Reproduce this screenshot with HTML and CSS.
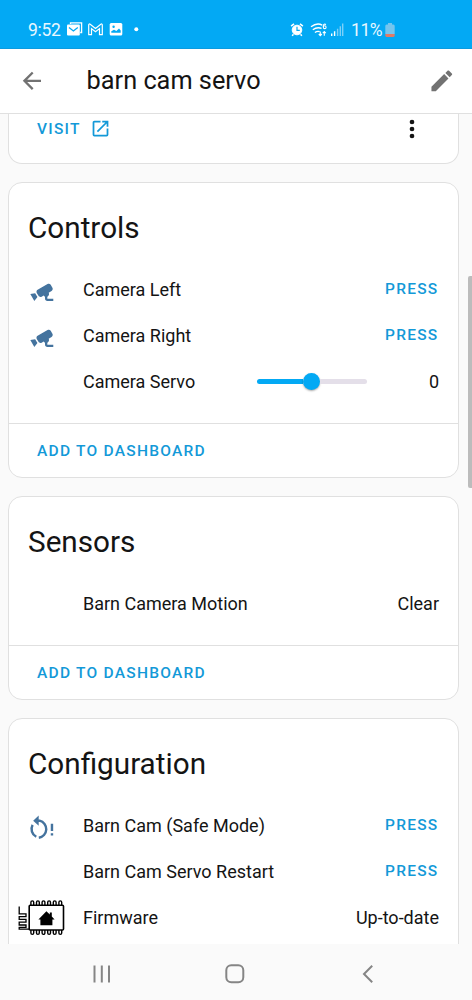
FILE: index.html
```html
<!DOCTYPE html>
<html lang="en">
<head>
<meta charset="utf-8">
<title>barn cam servo</title>
<link rel="stylesheet" href="styles.css">
</head>
<body>
<svg class="defs" aria-hidden="true">
  <symbol id="cctv" viewBox="0 0 24 24"><path d="M18.15,4.94C17.77,4.91 17.37,5 17,5.2L8.35,10.2C7.39,10.76 7.07,12 7.62,12.94L9.12,15.53C9.67,16.5 10.89,16.82 11.85,16.27L13.65,15.23C13.92,15.69 14.32,16.06 14.81,16.27V18.04C14.81,19.13 15.7,20 16.81,20H22V18.04H16.81V16.27C17.72,15.87 18.31,14.97 18.31,14C18.31,13.54 18.19,13.11 17.97,12.73L20.5,11.27C21.47,10.71 21.8,9.5 21.24,8.53L19.74,5.94C19.4,5.34 18.79,5 18.15,4.94M6.22,13.17L2,13.87L2.75,15.17L4.75,18.63L5.5,19.93L8.22,16.63L6.22,13.17Z"/></symbol>
</svg>
<div class="screen">
  <div class="status">
    <span class="clock">9:52</span>
    <svg class="notes" width="74" height="16" viewBox="0 0 74 16">
      <path d="M3.5 2V.9H14.6V10.5H13.2" fill="none" stroke="#fff" stroke-width="1.3"/>
      <rect x="0" y="2.6" width="12.8" height="10.8" rx="1" fill="#fff"/>
      <path d="M2 5.4L6.4 9L10.8 5.4" fill="none" stroke="#03a9f4" stroke-width="1.3"/>
      <path d="M21.7 12.7V2.8Q22 1.5 23.2 2.2L28.5 6.4L33.8 2.2Q35 1.5 35.3 2.8V12.7H32.5V6.6L28.5 9.7L24.5 6.6V12.7Z" fill="none" stroke="#fff" stroke-width="1.2"/>
      <rect x="42.7" y="1" width="12.6" height="12.4" rx="1.5" fill="#fff"/>
      <path d="M44.3 10.8V9.3L47 7.8L49.4 9.1L52 6.6L53.7 8.4V10.8Z" fill="#03a9f4"/>
      <circle cx="46.6" cy="4.7" r="1.2" fill="#03a9f4"/>
      <circle cx="69.3" cy="7.3" r="2" fill="#fff"/>
    </svg>
    <svg class="signals" width="58" height="16" viewBox="0 0 58 16">
      <circle cx="7" cy="8" r="4.8" fill="#fff" stroke="#fff" stroke-width="1"/>
      <path d="M1.1 4.2L4 1.8M12.9 4.2L10 1.8M3.4 12.3L2.2 13.9M10.6 12.3L11.8 13.9" stroke="#fff" stroke-width="1.5"/>
      <path d="M7 4.8V8.4H9.8" fill="none" stroke="#03a9f4" stroke-width="1.2"/>
      <g fill="none" stroke="#fff" stroke-width="1.4">
        <path d="M21 4.8Q27 .2 32.2 3.1M22.8 7.8Q27 4.6 31.6 6.4M24.9 10.5Q27.4 8.8 29.7 9.7"/>
        <path d="M30.3 9.5V13.5M28.8 12L30.3 13.6L31.8 12M34.3 13.7V9.7M32.8 11.1L34.3 9.5L35.8 11.1" stroke-width="1.1"/>
        <path d="M36 2.4Q33.2 1.2 33.2 4.8" stroke-width="1.1"/><circle cx="34.7" cy="5.2" r="1.4" stroke-width="1.1"/>
      </g>
      <path d="M41 14V11.5H42.4V14ZM43.9 14V9.2H45.3V14Z" fill="#fff"/>
      <path d="M46.9 14V6.7H48.3V14ZM49.6 14V4.3H51V14ZM52 14V1.6H53.4V14Z" fill="#7dd0f8"/>
    </svg>
    <span class="percent">11%</span>
    <svg class="battery" width="10" height="15" viewBox="0 0 10 15"><path d="M3 0H7V1.5H8.4Q9.7 1.5 9.7 3V11H.3V3Q.3 1.5 1.6 1.5H3Z" fill="#75c5ee"/><path d="M.3 11H9.7V12.6Q9.7 14 8.4 14H1.6Q.3 14 .3 12.6Z" fill="#e17b68"/></svg>
  </div>
  <div class="toolbar">
    <svg class="icon" viewBox="0 0 24 24"><path d="M20,11V13H8L13.5,18.5L12.08,19.92L4.16,12L12.08,4.08L13.5,5.5L8,11H20Z"/></svg>
    <span class="title">barn cam servo</span>
    <svg class="icon" viewBox="0 0 24 24"><path d="M20.71,7.04C21.1,6.65 21.1,6 20.71,5.63L18.37,3.29C18,2.9 17.35,2.9 16.96,3.29L15.12,5.12L18.87,8.87M3,17.25V21H6.75L17.81,9.93L14.06,6.18L3,17.25Z"/></svg>
  </div>
  <div class="content">
    <section class="card device">
      <span class="action">VISIT</span>
      <svg class="open" viewBox="0 0 24 24"><path d="M14,3V5H17.59L7.76,14.83L9.17,16.24L19,6.41V10H21V3M19,19H5V5H12V3H5C3.89,3 3,3.9 3,5V19A2,2 0 0,0 5,21H19A2,2 0 0,0 21,19V12H19V19Z"/></svg>
      <svg class="dots" viewBox="0 0 6 20"><circle cx="3" cy="3" r="2.35"/><circle cx="3" cy="10" r="2.35"/><circle cx="3" cy="17" r="2.35"/></svg>
    </section>
    <section class="card">
      <h2>Controls</h2>
      <div class="rows">
        <div class="row"><svg class="entity"><use href="#cctv"/></svg><span class="name">Camera Left</span><span class="action">PRESS</span></div>
        <div class="row"><svg class="entity"><use href="#cctv"/></svg><span class="name">Camera Right</span><span class="action">PRESS</span></div>
        <div class="row"><span class="entity"></span><span class="name">Camera Servo</span><span class="slider"><span class="fill"></span><span class="thumb"></span><span class="rest"></span></span><span class="value number">0</span></div>
      </div>
      <div class="footer"><span class="action">ADD TO DASHBOARD</span></div>
    </section>
    <section class="card">
      <h2>Sensors</h2>
      <div class="rows">
        <div class="row"><span class="entity"></span><span class="name">Barn Camera Motion</span><span class="value">Clear</span></div>
      </div>
      <div class="footer"><span class="action">ADD TO DASHBOARD</span></div>
    </section>
    <section class="card">
      <h2>Configuration</h2>
      <div class="rows">
        <div class="row"><svg class="entity" viewBox="0.9 -1 24 24"><path d="M4.9 8.4A7.6 7.6 0 0 0 8.1 18.8M10.3 19.7A7.6 7.6 0 0 0 11 4.8H8.5" fill="none" stroke="#44739e" stroke-width="2.1"/><path d="M10.2 .4V9.2L5.4 4.8Z"/><path d="M20.7 7.5H22.8V13.7H20.7ZM20.7 15.7H22.8V17.8H20.7Z"/></svg><span class="name">Barn Cam (Safe Mode)</span><span class="action">PRESS</span></div>
        <div class="row"><span class="entity"></span><span class="name">Barn Cam Servo Restart</span><span class="action">PRESS</span></div>
        <div class="row"><svg class="chip" width="48" height="38" viewBox="0 0 48 38">
          <g fill="none" stroke="#000" stroke-width="1.4">
            <rect x="11.2" y="6.2" width="34.3" height="24.8" rx="1" stroke-width="1.6"/>
            <path d="M12.9 6V3.3a1.4 1.4 0 0 1 2.8 0V6M18.5 6V3.3a1.4 1.4 0 0 1 2.8 0V6M24.1 6V3.3a1.4 1.4 0 0 1 2.8 0V6M29.7 6V3.3a1.4 1.4 0 0 1 2.8 0V6M35.3 6V3.3a1.4 1.4 0 0 1 2.8 0V6M40.9 6V3.3a1.4 1.4 0 0 1 2.8 0V6"/>
            <path d="M12.9 31V34a1.4 1.4 0 0 0 2.8 0V31M18.5 31V34a1.4 1.4 0 0 0 2.8 0V31M24.1 31V34a1.4 1.4 0 0 0 2.8 0V31M29.7 31V34a1.4 1.4 0 0 0 2.8 0V31M35.3 31V34a1.4 1.4 0 0 0 2.8 0V31M40.9 31V34a1.4 1.4 0 0 0 2.8 0V31"/>
            <path d="M1.2 7.5V14.8H8V17.6H1.2V20.4H8V23.2H1.2V26H8V28.3H1.2V30.2H11M8 14.8V17.6" stroke-width="1.3"/>
          </g>
          <path d="M20.4 20.4L28.4 12.2L31.8 15.4V13.4H33.8V17.5L36.6 20.4H34.4V26.2H22.4V20.4Z"/>
        </svg><span class="name">Firmware</span><span class="value">Up-to-date</span></div>
      </div>
    </section>
    <div class="scrollbar"></div>
  </div>
  <div class="nav">
    <svg width="18" height="18" viewBox="0 0 18 18"><path d="M1.5 .5V17.5M8.8 .5V17.5M16 .5V17.5"/></svg>
    <svg class="home" width="20" height="20" viewBox="0 0 20 20"><rect x="1.3" y="1.3" width="17" height="17" rx="5"/></svg>
    <svg width="12" height="18" viewBox="0 0 12 18"><path d="M10.2 .8L2 9L10.2 17.2"/></svg>
  </div>
</div>
</body>
</html>
```
FILE: styles.css
```css
* { box-sizing: border-box; }
body { margin: 0; font-family: Roboto, sans-serif; color: #141414; background: #fafafa; }
svg { display: block; flex: none; }
.defs { position: absolute; width: 0; height: 0; }
.screen { width: 472px; height: 1000px; display: flex; flex-direction: column; overflow: hidden; }
.status { flex: none; height: 49px; display: flex; align-items: center; padding: 12px 0 0 28px; background: #03a9f4; border-bottom: 1px solid #0a9be0; color: #e8f7ff; font-size: 17.5px; }
.clock { width: 39px; letter-spacing: -0.3px; }
.signals { margin-left: 149px; }
.percent { margin-left: 3px; width: 33px; letter-spacing: -0.4px; }
.battery { margin-left: 1px; }
.toolbar { flex: none; height: 65px; display: flex; align-items: center; padding: 0 16.5px 1px 17.5px; background: #fff; border-bottom: 1px solid #e0e0e0; }
.icon { width: 27.6px; height: 27.6px; fill: #727272; }
.title { flex: 1; margin-left: 41.5px; font-size: 25.3px; }
.content { position: relative; flex: 1; min-height: 0; overflow: hidden; padding: 0 13px 0 8px; display: flex; flex-direction: column; gap: 18px; }
.card { flex: none; background: #fff; border: 1px solid #e0e0e0; border-radius: 14px; }
.device { height: 50px; border-top: 0; border-radius: 0 0 14px 14px; display: flex; align-items: center; padding: 0 43px 20px 28px; }
.open { width: 21px; height: 21px; margin-left: 9px; fill: #1399d8; }
.dots { width: 6px; height: 20px; margin-left: auto; fill: #141414; }
h2 { margin: 0; height: 83px; padding: 0 19px; font-size: 29.7px; font-weight: 400; line-height: 89px; }
.rows { padding: 0 19px 19px; }
.row { height: 46px; display: flex; align-items: center; }
.entity { width: 27.6px; height: 27.6px; margin-top: 5px; fill: #44739e; flex: none; }
.name { flex: 1; margin-left: 27.4px; font-size: 18px; white-space: nowrap; }
.value { font-size: 18px; }
.action { color: #1399d8; font-size: 15.5px; font-weight: 500; letter-spacing: 1.25px; }
.number { width: 72px; text-align: right; }
.slider { display: flex; align-items: center; width: 110px; }
.fill { width: 46px; height: 5px; border-radius: 3px 0 0 3px; background: #03a9f4; }
.rest { flex: 1; height: 5px; border-radius: 0 3px 3px 0; background: #e4dfe9; }
.thumb { width: 17px; height: 17px; border-radius: 50%; background: #03a9f4; box-shadow: 0 1px 2px rgba(0,0,0,.35); }
.footer { height: 54px; padding-left: 28px; border-top: 1px solid #e0e0e0; display: flex; align-items: center; }
.chip { margin: 2px 0 0 -10px; }
.chip + .name { margin-left: 17px; }
.row .action { margin-right: 0.5px; }
.scrollbar { position: absolute; right: 0; top: 162px; width: 4px; height: 212px; border-radius: 2px 0 0 2px; background: #bcbcbc; }
.nav { flex: none; height: 56px; display: flex; align-items: center; justify-content: space-between; padding: 3px 98px 0 93px; background: #fafafa; }
.nav svg { fill: none; stroke: #858585; stroke-width: 2; }
.nav .home { margin-right: 4px; }
```
